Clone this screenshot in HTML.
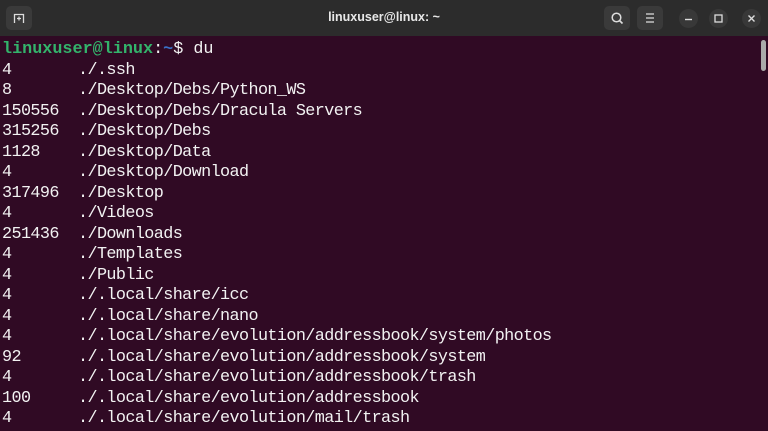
<!DOCTYPE html>
<html><head><meta charset="utf-8"><style>
html,body{margin:0;padding:0;width:768px;height:431px;overflow:hidden;background:#300a24;}
.hdr{position:absolute;left:0;top:0;width:768px;height:36px;background:#2c2c2c;}
.btn{position:absolute;top:6px;width:26px;height:24px;border-radius:5px;background:#3a3a3a;}
.circ{position:absolute;top:9px;width:19px;height:19px;border-radius:50%;background:#383838;}
.title{position:absolute;left:0;width:768px;top:10px;text-align:center;color:#e8e8e8;font:bold 12.5px "Liberation Sans",sans-serif;}
.term{position:absolute;left:2px;top:40px;font-family:"Liberation Mono",monospace;font-size:16.8px;letter-spacing:-0.6px;color:#f2f2f2;}
.l{position:relative;height:20.5px;line-height:20.5px;white-space:pre;}
.l span.p{position:absolute;left:76px;}
.g{color:#33b36b;font-weight:bold}.b{color:#3a6fc4;font-weight:bold}
.sb{position:absolute;left:761px;top:40px;width:5px;height:31px;border-radius:3px;background:#aaa;}
</style></head><body>
<div class="hdr">
 <div class="btn" style="left:6px"><svg width="26" height="24"><path d="M8.5 17V8.5h9V17" fill="none" stroke="#ddd" stroke-width="1.3"/><path d="M13 10.5v4M11 12.5h4" stroke="#ddd" stroke-width="1.2"/></svg></div>
 <div class="title">linuxuser@linux: ~</div>
 <div class="btn" style="left:604px"><svg width="26" height="24"><circle cx="12.5" cy="11.5" r="4.3" fill="none" stroke="#ddd" stroke-width="1.5"/><path d="M15.5 14.5l3 3" stroke="#ddd" stroke-width="1.6"/></svg></div>
 <div class="btn" style="left:637px"><svg width="26" height="24"><path d="M9 8h8M9 12h8M9 16h8" stroke="#ddd" stroke-width="1.3"/></svg></div>
 <div class="circ" style="left:679px"><svg width="19" height="19"><path d="M6 10.5h7" stroke="#ddd" stroke-width="1.4"/></svg></div>
 <div class="circ" style="left:709px"><svg width="19" height="19"><rect x="6" y="6" width="7" height="7" fill="none" stroke="#ddd" stroke-width="1.3"/></svg></div>
 <div class="circ" style="left:742px"><svg width="19" height="19"><path d="M6.5 6.5l6 6M12.5 6.5l-6 6" stroke="#ddd" stroke-width="1.4"/></svg></div>
</div>
<div class="sb"></div>
<div class="term">
<div class="l" style="letter-spacing:0"><span class="g">linuxuser@linux</span>:<span class="b">~</span>$ du</div>
<div class="l">4<span class="p">./.ssh</span></div>
<div class="l">8<span class="p">./Desktop/Debs/Python_WS</span></div>
<div class="l">150556<span class="p">./Desktop/Debs/Dracula Servers</span></div>
<div class="l">315256<span class="p">./Desktop/Debs</span></div>
<div class="l">1128<span class="p">./Desktop/Data</span></div>
<div class="l">4<span class="p">./Desktop/Download</span></div>
<div class="l">317496<span class="p">./Desktop</span></div>
<div class="l">4<span class="p">./Videos</span></div>
<div class="l">251436<span class="p">./Downloads</span></div>
<div class="l">4<span class="p">./Templates</span></div>
<div class="l">4<span class="p">./Public</span></div>
<div class="l">4<span class="p">./.local/share/icc</span></div>
<div class="l">4<span class="p">./.local/share/nano</span></div>
<div class="l">4<span class="p">./.local/share/evolution/addressbook/system/photos</span></div>
<div class="l">92<span class="p">./.local/share/evolution/addressbook/system</span></div>
<div class="l">4<span class="p">./.local/share/evolution/addressbook/trash</span></div>
<div class="l">100<span class="p">./.local/share/evolution/addressbook</span></div>
<div class="l">4<span class="p">./.local/share/evolution/mail/trash</span></div>
</div>
</body></html>
